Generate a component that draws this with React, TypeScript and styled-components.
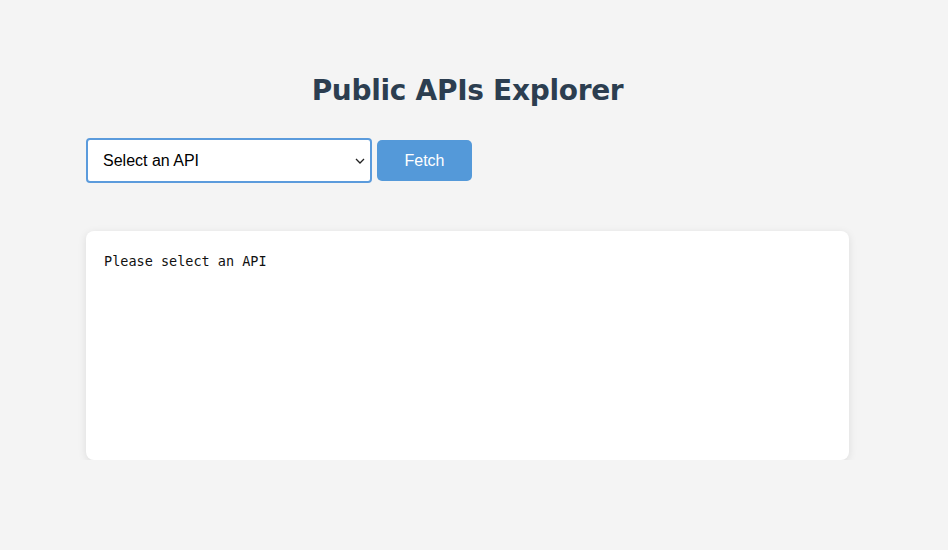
import React, { useState } from "react";
import styled, { createGlobalStyle } from "styled-components";

const GlobalStyle = createGlobalStyle`
  html, body {
    margin: 0;
    padding: 0;
    background: #f4f4f4;
    font-family: "Liberation Sans", Arial, sans-serif;
  }
`;

const Page = styled.div`
  width: 763px;
  margin: 0 0 0 86px;
  padding-top: 70px;
`;

const Title = styled.h1`
  margin: 0 0 26px;
  text-align: center;
  font-family: "DejaVu Sans", Verdana, sans-serif;
  font-weight: 700;
  font-size: 28px;
  letter-spacing: -0.3px;
  line-height: 42px;
  color: #2c3e50;
`;

const Controls = styled.div`
  display: flex;
  align-items: center;
  gap: 5px;
`;

const SelectWrap = styled.div`
  position: relative;
  width: 286px;
  height: 45px;
`;

const Select = styled.select`
  appearance: none;
  width: 100%;
  height: 100%;
  box-sizing: border-box;
  padding: 0 30px 0 15px;
  border: 2px solid #5b9bdc;
  border-radius: 4px;
  background: #fff;
  font-family: "Liberation Sans", Arial, sans-serif;
  font-size: 16px;
  color: #000;
  outline: none;
`;

const Chevron = styled.svg`
  position: absolute;
  right: 7px;
  top: 50%;
  width: 10px;
  height: 6px;
  margin-top: -3px;
  pointer-events: none;
`;

const Button = styled.button`
  width: 95px;
  height: 41px;
  border: none;
  border-radius: 5px;
  background: #5499d9;
  color: #fff;
  font-family: "Liberation Sans", Arial, sans-serif;
  font-size: 16px;
  cursor: pointer;
`;

const Output = styled.pre`
  margin: 48px 0 0;
  height: 229px;
  box-sizing: border-box;
  padding: 21px 18px;
  background: #fff;
  border-radius: 8px;
  box-shadow: 0 2px 8px rgba(0, 0, 0, 0.1);
  font-family: "DejaVu Sans Mono", "Liberation Mono", monospace;
  font-size: 13.5px;
  line-height: 18px;
  color: #111;
  white-space: pre-wrap;
`;

const apis = ["Cat Facts", "Random User", "Jokes", "Bored"];

export default function App() {
  const [api, setApi] = useState("");
  return (
    <>
      <GlobalStyle />
      <Page>
        <Title>Public APIs Explorer</Title>
        <Controls>
          <SelectWrap>
            <Select value={api} onChange={(e) => setApi(e.target.value)}>
              <option value="">Select an API</option>
              {apis.map((a) => (
                <option key={a} value={a}>
                  {a}
                </option>
              ))}
            </Select>
            <Chevron viewBox="0 0 10 6">
              <path d="M1 1l4 4 4-4" fill="none" stroke="#222" strokeWidth="1.3" />
            </Chevron>
          </SelectWrap>
          <Button>Fetch</Button>
        </Controls>
        <Output>Please select an API</Output>
      </Page>
    </>
  );
}
